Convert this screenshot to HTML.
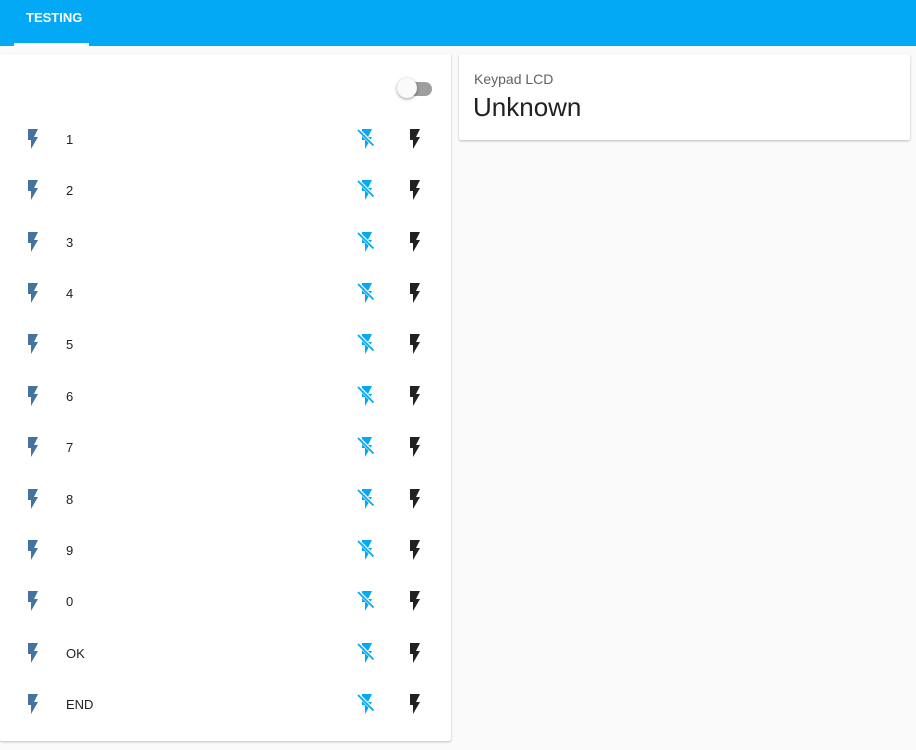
<!DOCTYPE html><html><head><style>
body{margin:0;width:916px;height:750px;background:#fafafa;font-family:"Liberation Sans",Roboto,sans-serif;position:relative;overflow:hidden}
.bar{position:absolute;left:0;top:0;width:916px;height:46px;background:#03a9f4}
.tab{position:absolute;left:26px;top:10px;color:#fff;font-size:13px;font-weight:bold}
.ul{position:absolute;left:14px;top:43px;width:75px;height:3px;background:#fff}
.card{position:absolute;background:#fff;border-radius:2px;box-shadow:0 1px 2px rgba(0,0,0,.25)}
.row{position:absolute;left:0;width:451px;height:24px}
.row svg{position:absolute;top:0;width:24px;height:24px}
.row span{position:absolute;left:66px;top:5px;font-size:13px;color:#212121}
.sw{position:absolute;left:400px;top:82px;width:32px;height:14px;border-radius:7px;background:#9e9e9e}
.knob{position:absolute;left:397px;top:78px;width:20px;height:20px;border-radius:50%;background:#fafafa;box-shadow:0 1px 3px rgba(0,0,0,.4)}
</style></head><body>
<div class="bar"><div class="tab">TESTING</div><div class="ul"></div></div>
<div class="card" style="left:0;top:54px;width:451px;height:687px"></div>
<div class="sw"></div><div class="knob"></div>
<div class="card" style="left:459px;top:54px;width:451px;height:86px">
<div style="position:absolute;left:15px;top:17px;font-size:14px;color:#616161">Keypad LCD</div>
<div style="position:absolute;left:14px;top:38px;font-size:26px;color:#212121">Unknown</div>
</div>
<div id="rows"></div>
<script>
var labels=["1","2","3","4","5","6","7","8","9","0","OK","END"],h="";
var f="M7,2V13H10V22L17,10H13L17,2H7Z";
var off='<path fill="#03a9f4" d="'+f+'"/><path d="M3,2.5L19,18.5" stroke="#fff" stroke-width="3.5"/><path d="M3,3L18.5,18.5" stroke="#03a9f4" stroke-width="1.8"/>';
labels.forEach(function(l,i){var y=Math.round(127+i*51.36);
h+='<div class="row" style="top:'+y+'px"><svg style="left:21px" viewBox="0 0 24 24"><path fill="#44739e" d="'+f+'"/></svg><span>'+l+'</span><svg style="left:355px" viewBox="0 0 24 24">'+off+'</svg><svg style="left:403px" viewBox="0 0 24 24"><path fill="#212121" d="'+f+'"/></svg></div>';});
document.getElementById("rows").innerHTML=h;
</script>
</body></html>
